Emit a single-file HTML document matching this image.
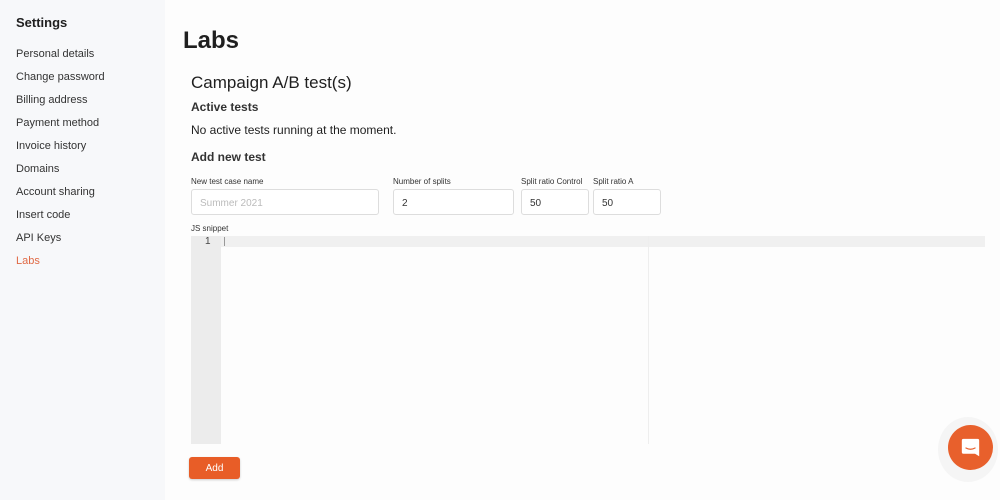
<!DOCTYPE html>
<html><head><style>
*{margin:0;padding:0;box-sizing:border-box}
body{width:1000px;height:500px;overflow:hidden;background:#fdfdfd;font-family:"Liberation Sans",Arial,sans-serif;color:#1f1f1f;position:relative}
.side{position:absolute;left:0;top:0;width:165px;height:500px;background:#f7f8fa}
.side h3{position:absolute;left:16px;top:15px;font-size:13px;font-weight:bold}
.side a{position:absolute;left:16px;font-size:11px;color:#333;text-decoration:none}
.abs{position:absolute;white-space:nowrap}
.lbl{font-size:8px;color:#333}
.inp{position:absolute;height:26px;border:1px solid #ddd;border-radius:3px;font-size:10px;padding:8px 8px;color:#333;background:#fff}
</style></head><body>
<div class="side">
<h3>Settings</h3>
<a style="top:48px">Personal details</a>
<a style="top:71px">Change password</a>
<a style="top:94px">Billing address</a>
<a style="top:117px">Payment method</a>
<a style="top:140px">Invoice history</a>
<a style="top:163px">Domains</a>
<a style="top:186px">Account sharing</a>
<a style="top:209px">Insert code</a>
<a style="top:232px">API Keys</a>
<a style="top:255px;color:#e06a45">Labs</a>
</div>
<div class="abs" style="left:183px;top:27px;font-size:24px;font-weight:bold">Labs</div>
<div class="abs" style="left:191px;top:73px;font-size:17px">Campaign A/B test(s)</div>
<div class="abs" style="left:191px;top:100px;font-size:12px;font-weight:bold;color:#333">Active tests</div>
<div class="abs" style="left:191px;top:123px;font-size:12px">No active tests running at the moment.</div>
<div class="abs" style="left:191px;top:150px;font-size:12px;font-weight:bold;color:#333">Add new test</div>
<div class="abs lbl" style="left:191px;top:177px">New test case name</div>
<div class="abs lbl" style="left:393px;top:177px">Number of splits</div>
<div class="abs lbl" style="left:521px;top:177px">Split ratio Control</div>
<div class="abs lbl" style="left:593px;top:177px">Split ratio A</div>
<div class="inp" style="left:191px;top:189px;width:188px;color:#bbb">Summer 2021</div>
<div class="inp" style="left:393px;top:189px;width:121px">2</div>
<div class="inp" style="left:521px;top:189px;width:68px">50</div>
<div class="inp" style="left:593px;top:189px;width:68px">50</div>
<div class="abs lbl" style="left:191px;top:224px">JS snippet</div>
<div class="abs" style="left:191px;top:236px;width:30px;height:208px;background:#ececec"></div>
<div class="abs" style="left:221px;top:236px;width:764px;height:11px;background:#f0f0f0"></div>
<div class="abs" style="left:224px;top:237px;width:1px;height:9px;background:#999"></div>
<div class="abs" style="left:205px;top:236px;font-size:10px;color:#444">1</div>
<div class="abs" style="left:648px;top:236px;width:1px;height:208px;background:#eee"></div>
<div class="abs" style="left:189px;top:457px;width:51px;height:22px;background:#e85d27;border-radius:3px;color:#fff;font-size:10px;text-align:center;line-height:24px;box-shadow:0 1px 2px rgba(0,0,0,.2)">Add</div>
<div class="abs" style="left:938px;top:417px;width:60px;height:65px;border-radius:50%;background:#f5f5f5"></div>
<div class="abs" style="left:948px;top:425px;width:45px;height:45px;border-radius:50%;background:#e8602c"></div>
<svg class="abs" style="left:961px;top:438px" width="19" height="20" viewBox="0 0 23 24"><path d="M3 1h17a2 2 0 0 1 2 2v19l-5-3H3a2 2 0 0 1-2-2V3a2 2 0 0 1 2-2z" fill="#fff"/><path d="M6 12q5.5 3 11 0" stroke="#e8602c" stroke-width="1.5" fill="none" stroke-linecap="round"/></svg>
</body></html>
